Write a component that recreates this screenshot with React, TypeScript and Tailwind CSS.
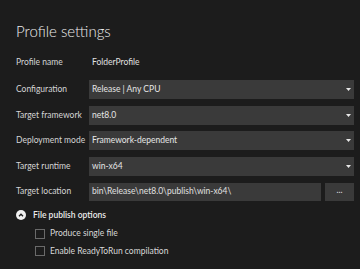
import React from 'react';

const font = { fontFamily: 'Lato, "Open Sans", sans-serif' };

function Caret() {
  return (
    <svg width="5" height="3" viewBox="0 0 5 3" className="shrink-0">
      <path d="M0 0h5L2.5 3z" fill="#e8e8e8" />
    </svg>
  );
}

function Dropdown({ value }: { value: string }) {
  return (
    <div className="h-[19px] bg-[#3a3a3a] flex items-center justify-between pl-[3px] pr-[3px]">
      <span className="text-[#e6e6e6]">{value}</span>
      <Caret />
    </div>
  );
}

function Row({ label, children }: { label: string; children: React.ReactNode }) {
  return (
    <div className="grid grid-cols-[73px_1fr] items-center h-[19px]">
      <span className="text-[#d4d4d4] whitespace-nowrap">{label}</span>
      {children}
    </div>
  );
}

function Check({ label }: { label: string }) {
  return (
    <div className="flex items-center gap-[5px] h-[11px]">
      <span className="w-[10px] h-[10px] border border-[#6a6a6a] bg-[#1c1c1c]" />
      <span className="text-[#d8d8d8]">{label}</span>
    </div>
  );
}

export default function App() {
  return (
    <div className="w-[360px] h-[269px] bg-[#1c1c1c] text-[8.5px] pl-4 pr-[6px] overflow-hidden" style={font}>
      <h1 className="pt-[19px] text-[15px] font-light text-[#ececec] leading-[24px]">Profile settings</h1>

      <div className="mt-[10px]">
        <Row label="Profile name">
          <span className="pl-[3px] text-[#e0e0e0]">FolderProfile</span>
        </Row>
      </div>

      <div className="mt-[8px] flex flex-col gap-[6.5px]">
        <Row label="Configuration">
          <Dropdown value="Release | Any CPU" />
        </Row>
        <Row label="Target framework">
          <Dropdown value="net8.0" />
        </Row>
        <Row label="Deployment mode">
          <Dropdown value="Framework-dependent" />
        </Row>
        <Row label="Target runtime">
          <Dropdown value="win-x64" />
        </Row>
        <Row label="Target location">
          <div className="flex gap-[4px] h-[18px]">
            <div className="flex-1 bg-[#3a3a3a] flex items-center pl-[3px] text-[#e0e0e0]">
              bin\Release\net8.0\publish\win-x64\
            </div>
            <div className="w-[29px] bg-[#3a3a3a] flex items-center justify-center text-[#e0e0e0] leading-none pb-[2px]">
              ...
            </div>
          </div>
        </Row>
      </div>

      <div className="mt-[8px] flex items-center gap-[7px] h-[12px]">
        <span className="w-[10px] h-[10px] rounded-full bg-[#f0f0f0] flex items-center justify-center">
          <svg width="6" height="4" viewBox="0 0 6 4">
            <path d="M1 3.2L3 1.2L5 3.2" stroke="#1c1c1c" strokeWidth="1.3" fill="none" />
          </svg>
        </span>
        <span className="text-[#ececec] font-semibold">File publish options</span>
      </div>

      <div className="mt-[7px] ml-[19px] flex flex-col gap-[6.5px]">
        <Check label="Produce single file" />
        <Check label="Enable ReadyToRun compilation" />
      </div>
    </div>
  );
}
